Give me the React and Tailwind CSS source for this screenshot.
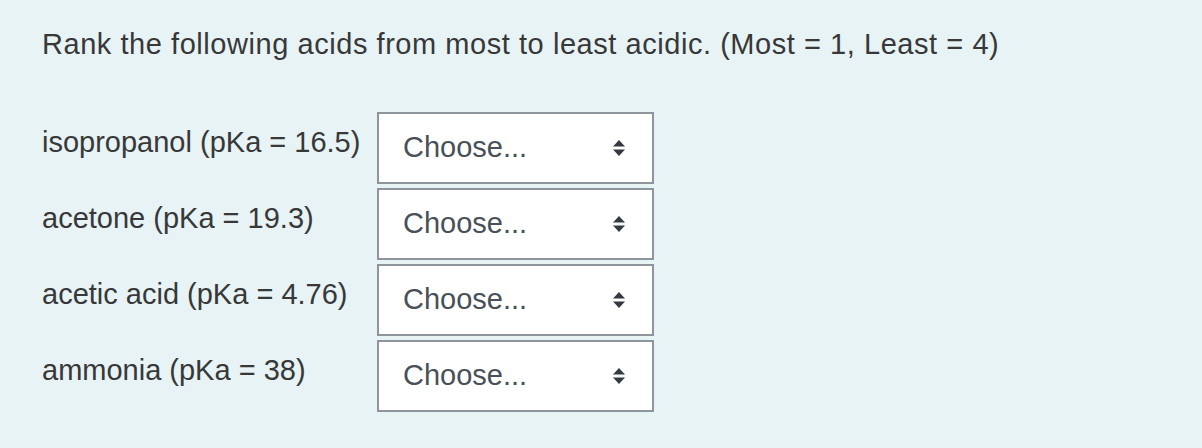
import React from "react";

const rows = [
  "isopropanol (pKa = 16.5)",
  "acetone (pKa = 19.3)",
  "acetic acid (pKa = 4.76)",
  "ammonia (pKa = 38)",
];

function Arrows() {
  return (
    <svg width="14" height="20" viewBox="0 0 14 20" className="text-[#343a40]">
      <path d="M7 2 L13 8.5 L1 8.5 Z" fill="currentColor" />
      <path d="M7 18 L13 11.5 L1 11.5 Z" fill="currentColor" />
    </svg>
  );
}

export default function App() {
  return (
    <div
      className="w-[1202px] h-[448px] bg-[#e7f3f5] text-[#383838] pl-[42px] pt-[24px]"
      style={{ fontFamily: "'Liberation Sans', Arial, sans-serif" }}
    >
      <p className="text-[29px] leading-[40px] tracking-[0.55px]">
        Rank the following acids from most to least acidic. (Most = 1, Least = 4)
      </p>
      <div className="mt-[48px] flex flex-col gap-[4px]">
        {rows.map((r) => (
          <div key={r} className="flex">
            <div className="w-[335px] text-[29px] leading-[40px] pt-[10px]">{r}</div>
            <div className="w-[277px] h-[72px] border-2 border-[#8f959e] bg-white flex items-center justify-between pl-[24px] pr-[26px]">
              <span className="text-[29px] text-[#495057]">Choose...</span>
              <Arrows />
            </div>
          </div>
        ))}
      </div>
    </div>
  );
}
